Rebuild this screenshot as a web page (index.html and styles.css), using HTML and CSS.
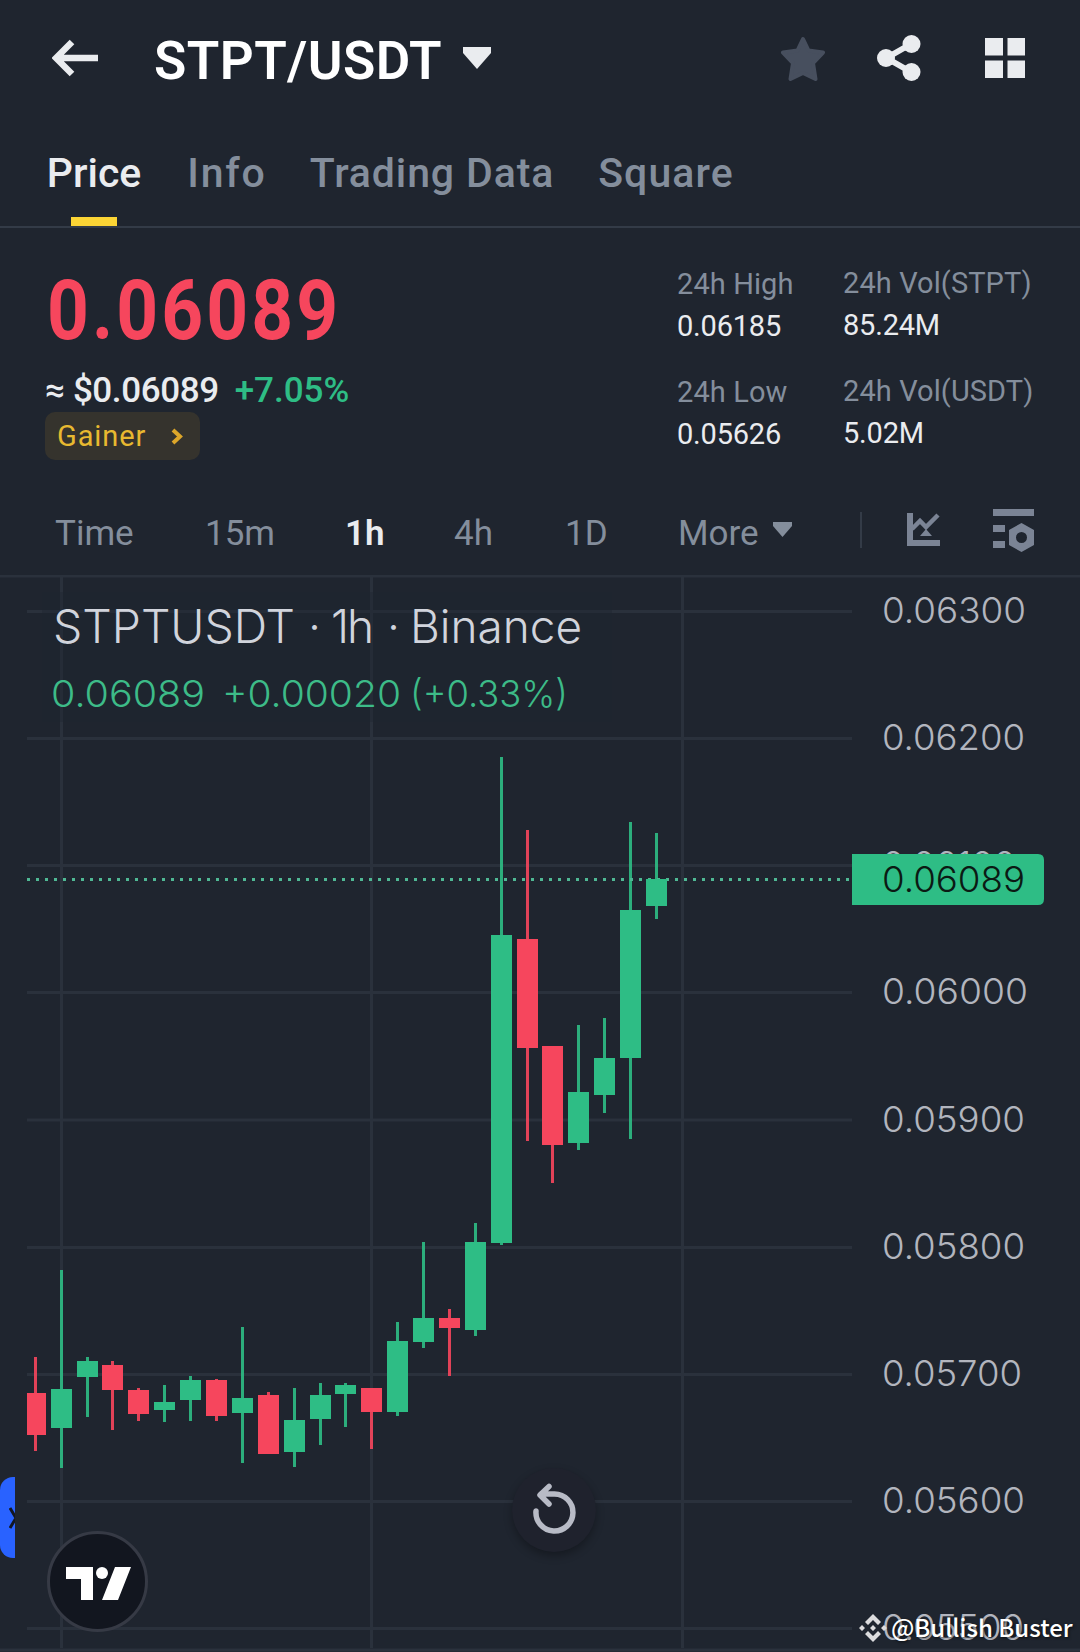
FILE: index.html
```html
<!DOCTYPE html>
<html lang="en">
<head>
  <meta charset="UTF-8">
  <meta name="viewport" content="width=device-width, initial-scale=1.0">
  <title>STPT/USDT</title>
  <link rel="stylesheet" href="styles.css">
</head>
<body>
  <header class="topbar">
    <svg class="back" width="48" height="38" viewBox="0 0 48 38">
      <path d="M20 3 L4 19 L20 35 M4 19 H46" fill="none" stroke="#eaecef" stroke-width="6.5"/>
    </svg>
    <h1>STPT/USDT</h1>
    <svg class="caret" width="28" height="22" viewBox="0 0 28 22">
      <path d="M0 0H28V6L14 22L0 6Z" fill="#eaecef"/>
    </svg>
    <div class="actions">
      <svg width="46" height="46" viewBox="0 0 46 46">
        <path d="M23 4 L28.500 15.500 L43 17.500 L33 28 L35.500 44 L23 38 L10.500 44 L13 28 L3 17.500 L17.500 15.500Z" fill="#474f5e" stroke="#474f5e" stroke-width="4" stroke-linejoin="round"/>
      </svg>
      <svg width="44" height="46" viewBox="0 0 44 46">
        <path d="M34 9 L9.500 23 L34 37" fill="none" stroke="#eaecef" stroke-width="6"/>
        <circle cx="34.500" cy="9" r="9" fill="#eaecef"/>
        <circle cx="9" cy="23" r="9" fill="#eaecef"/>
        <circle cx="34.500" cy="37" r="9" fill="#eaecef"/>
      </svg>
      <svg width="40" height="40" viewBox="0 0 40 40">
        <path d="M0 0H18V17.500H0Z M22.500 0H40V17.500H22.500Z M0 22.500H18V40H0Z M22.500 22.500H40V40H22.500Z" fill="#eaecef"/>
      </svg>
    </div>
  </header>

  <nav class="tabs">
    <a class="tab active">Price</a>
    <a class="tab info">Info</a>
    <a class="tab trading">Trading Data</a>
    <a class="tab square">Square</a>
  </nav>

  <section class="ticker">
    <div class="quote">
      <div class="last">0.06089</div>
      <div class="fiat"><span>≈ $0.06089</span><span class="up">+7.05%</span></div>
      <div class="badge">Gainer
        <svg width="12" height="17" viewBox="0 0 12 17"><path d="M2 2 L9 8.500 L2 15" fill="none" stroke="#dca62a" stroke-width="4"/></svg>
      </div>
    </div>
    <div class="stats">
      <div class="stat"><span>24h High</span><b>0.06185</b></div>
      <div class="stat"><span>24h Low</span><b>0.05626</b></div>
    </div>
    <div class="stats vol">
      <div class="stat"><span>24h Vol(STPT)</span><b>85.24M</b></div>
      <div class="stat"><span>24h Vol(USDT)</span><b>5.02M</b></div>
    </div>
  </section>

  <nav class="intervals">
    <span>Time</span>
    <span>15m</span>
    <span class="on">1h</span>
    <span>4h</span>
    <span>1D</span>
    <span class="more">More
      <svg width="19" height="15" viewBox="0 0 19 15"><path d="M0 0H19V4L9.500 15L0 4Z" fill="#848e9c"/></svg>
    </span>
    <i class="sep"></i>
    <svg width="33" height="34" viewBox="0 0 33 34">
      <path d="M0 0H6V27H33V33H0Z" fill="#7b8495"/>
      <path d="M5 16 L13 8 L19 14 L31 2" fill="none" stroke="#7b8495" stroke-width="4.500"/>
      <path d="M19 16 L25 23H13Z" fill="#7b8495"/>
    </svg>
    <svg width="42" height="43" viewBox="0 0 42 43">
      <path d="M0 0H41V7H0Z M0 16H12V23H0Z M0 32H12V39H0Z" fill="#7b8495"/>
      <path fill-rule="evenodd" d="M28.500 14 L41 21V36L28.500 43L16 36V21Z M28.500 23A5.500 5.500 0 1 0 28.500 34A5.500 5.500 0 1 0 28.500 23Z" fill="#7b8495"/>
    </svg>
  </nav>

  <main class="chart">
    <svg class="plot" width="1080" height="1077" viewBox="0 575 1080 1077">
      <path class="frame" d="M0 576H1080 M0 1650H1080"/>
      <path class="grid" d="M61.500 576V1648 M371.500 576V1648 M682.500 576V1648 M27 611.500H852 M27 738.500H852 M27 865.500H852 M27 992.500H852 M27 1120H852 M27 1247.500H852 M27 1374.500H852 M27 1501.500H852 M27 1628.500H852"/>
      <rect x="42" y="592" width="570" height="130" fill="#1f252f" opacity=".4"/>

      <!-- price scale -->
      <g class="scale">
        <text x="882" y="622.500" textLength="144" lengthAdjust="spacingAndGlyphs">0.06300</text>
        <text x="882" y="749.500" textLength="143" lengthAdjust="spacingAndGlyphs">0.06200</text>
        <text x="882" y="876.500" textLength="134" lengthAdjust="spacingAndGlyphs">0.06100</text>
        <text x="882" y="1003.500" textLength="146" lengthAdjust="spacingAndGlyphs">0.06000</text>
        <text x="882" y="1131.500" textLength="143" lengthAdjust="spacingAndGlyphs">0.05900</text>
        <text x="882" y="1258.500" textLength="143" lengthAdjust="spacingAndGlyphs">0.05800</text>
        <text x="882" y="1385.500" textLength="140" lengthAdjust="spacingAndGlyphs">0.05700</text>
        <text x="882" y="1512.500" textLength="143" lengthAdjust="spacingAndGlyphs">0.05600</text>
        <text x="882" y="1639.500" textLength="142" lengthAdjust="spacingAndGlyphs">0.05500</text>
      </g>

      <!-- wicks -->
      <g class="wick">
        <path class="down" d="M35.500 1357V1451 M112.500 1361V1430 M138.500 1388V1421 M216.500 1379V1421 M268.500 1392V1454 M371.500 1388V1449 M449.500 1309V1376 M527.500 830V1141 M552.500 1046V1183"/>
        <path class="rise" d="M61.500 1270V1468 M87.500 1357V1417 M164.500 1385V1422 M190.500 1376V1421 M242.500 1327V1463 M294.500 1388V1467 M320.500 1383V1445 M345.500 1383V1427 M397.500 1322V1416 M423.500 1242V1348 M475.500 1223V1336 M501.500 757V1245 M578.500 1025V1150 M604.500 1018V1113 M630.500 822V1139 M656.500 833V919"/>
      </g>
      <path class="last-line" d="M27 879.500H852"/>
      <!-- bodies -->
      <path d="M27 1393H46V1435H27Z" fill="#f6465d"/>
      <g class="body">
        <path class="down" d="M112.500 1365V1390 M138.500 1390V1414 M216.500 1380V1416 M268.500 1395V1454 M371.500 1388V1412 M449.500 1318V1328 M527.500 939V1048 M552.500 1046V1145"/>
        <path class="rise" d="M61.500 1389V1428 M87.500 1361V1377 M164.500 1402V1410 M190.500 1380V1400 M242.500 1398V1413 M294.500 1420V1452 M320.500 1395V1419 M345.500 1385V1394 M397.500 1341V1412 M423.500 1318V1342 M475.500 1242V1330 M501.500 935V1243 M578.500 1092V1143 M604.500 1058V1095 M630.500 910V1058 M656.500 879V906"/>
      </g>

      <path d="M852 854H1038Q1044 854 1044 860V899Q1044 905 1038 905H852Z" fill="#2ebd85"/>
      <text class="tag" x="882" y="891.500" textLength="143" lengthAdjust="spacingAndGlyphs">0.06089</text>

      <!-- legend -->
      <g class="legend">
        <text x="53" y="643" textLength="242" lengthAdjust="spacingAndGlyphs">STPTUSDT</text>
        <text x="308" y="643">·</text>
        <text x="331" y="643" textLength="43">1h</text>
        <text x="387" y="643">·</text>
        <text x="410" y="643" textLength="172" lengthAdjust="spacingAndGlyphs">Binance</text>
      </g>
      <g class="change">
        <text x="51" y="707" textLength="154" lengthAdjust="spacingAndGlyphs">0.06089</text>
        <text x="222" y="707" textLength="179" lengthAdjust="spacingAndGlyphs">+0.00020</text>
        <text x="410" y="707" textLength="158" lengthAdjust="spacingAndGlyphs">(+0.33%)</text>
      </g>
    </svg>

    <div class="drawer">
      <svg width="6" height="22" viewBox="0 0 6 22"><path d="M1 1 L7 11 L1 21" fill="none" stroke="#131722" stroke-width="3"/></svg>
    </div>

    <div class="tv">
      <svg width="65" height="33" viewBox="0 0 65 33">
        <path d="M0 0H27V33H15V12H0Z M49 0H65L52 33H36Z" fill="#fff"/>
        <circle cx="36" cy="6" r="6" fill="#fff"/>
      </svg>
    </div>

    <div class="reset">
      <svg width="44" height="52" viewBox="0 0 44 52">
        <path d="M3 28 A18.500 18.500 0 1 0 21.500 11 H8 M16 3.500 L7 12 L16 21" fill="none" stroke="#b8bbc6" stroke-width="5.500" stroke-linecap="round" stroke-linejoin="round"/>
      </svg>
    </div>

    <div class="watermark">
      <svg width="28" height="28" viewBox="0 0 28 28">
        <path d="M14 0L22 8L19 11L14 6L9 11L6 8Z M14 28L22 20L19 17L14 22L9 17L6 20Z M14 11L17 14L14 17L11 14Z M3 11L6 14L3 17L0 14Z M25 11L28 14L25 17L22 14Z" fill="#dcdcde"/>
      </svg>
      <span>@Bullish Buster</span>
    </div>
  </main>
</body>
</html>
```

FILE: styles.css
```css
* {
  box-sizing: border-box;
}
body {
  margin: 0;
  width: 1080px;
  height: 1652px;
  overflow: hidden;
  background: #1f252f;
  color: #eaecef;
  font-family: Roboto, 'Open Sans', sans-serif;
}
svg {
  display: block;
  flex: none;
}

/* header */
.topbar {
  display: flex;
  align-items: center;
  height: 116px;
  padding: 0 55px 0 52px;
}
h1 {
  margin: 6px 0 0 54px;
  width: 288px;
  font-size: 53px;
  font-weight: 600;
  letter-spacing: 0.4px;
  white-space: nowrap;
  color: #fff;
}
.caret {
  margin-left: 21px;
}
.actions {
  display: flex;
  align-items: center;
  margin-left: auto;
}
.actions svg + svg {
  margin-left: 51px;
}
.actions svg:last-child {
  margin-left: 64px;
}

/* tabs */
.tabs {
  display: flex;
  height: 112px;
  padding-left: 47px;
  border-bottom: 2px solid #333b47;
}
.tab {
  display: flex;
  flex-direction: column;
  align-items: center;
  justify-content: space-between;
  padding-top: 32px;
  width: 94px;
  font-size: 41px;
  line-height: 50px;
  font-weight: 500;
  color: #848e9c;
  white-space: nowrap;
}
.tab.active {
  color: #eaecef;
}
.tab.active::after {
  content: '';
  width: 46px;
  height: 9px;
  background: #fcd535;
}
.tab.info {
  width: 78px;
  margin-left: 47px;
  letter-spacing: 1.8px;
}
.tab.trading {
  width: 244px;
  margin-left: 44px;
  letter-spacing: 0.9px;
}
.tab.square {
  width: 136px;
  margin-left: 44px;
  letter-spacing: 1.1px;
}

/* price and 24h stats */
.ticker {
  display: flex;
  height: 262px;
  padding: 39px 0 0 45px;
}
.quote {
  width: 632px;
}
.last {
  margin: 2px 0 0 2px;
  font-size: 83px;
  line-height: 84px;
  font-weight: 700;
  letter-spacing: 3.5px;
  transform: scaleX(.88);
  transform-origin: 0 0;
  color: #f6465d;
}
.fiat {
  display: flex;
  gap: 16px;
  margin-top: 17px;
  font-size: 35px;
  line-height: 41px;
  font-weight: 500;
  letter-spacing: -0.4px;
  white-space: nowrap;
}
.up {
  color: #2ebd85;
  letter-spacing: 0;
}
.badge {
  display: flex;
  align-items: center;
  justify-content: space-between;
  width: 155px;
  height: 48px;
  margin-top: 1px;
  padding: 0 17px 0 12px;
  border-radius: 10px;
  background: #35332d;
  color: #e8b930;
  font-size: 29px;
  letter-spacing: 0.9px;
}
.stats {
  width: 166px;
  margin-top: -4px;
}
.stat {
  display: flex;
  flex-direction: column;
  height: 108px;
  font-size: 29px;
  line-height: 42px;
  white-space: nowrap;
}
.stat span {
  color: #848e9c;
  letter-spacing: 0.1px;
}
.stat b {
  font-weight: 400;
  letter-spacing: -0.2px;
}
.vol {
  margin-top: -5px;
}

/* intervals */
.intervals {
  display: grid;
  grid-template-columns: 150px 140px 109px 111px 113px 182px 47px 86px 42px;
  align-items: center;
  height: 85px;
  padding: 1px 0 0 55px;
  font-size: 35px;
  color: #848e9c;
}
.intervals > svg, .sep {
  position: relative;
  top: -3px;
}
.intervals .on {
  color: #eaecef;
  font-weight: 600;
}
.more {
  display: flex;
  align-items: center;
  gap: 14px;
}
.more svg {
  margin-bottom: 7px;
}
.sep {
  width: 2px;
  height: 36px;
  background: #333b47;
}

/* chart */
.chart {
  position: relative;
  height: 1077px;
}
.frame, .grid {
  fill: none;
  stroke: #2a313c;
  stroke-width: 3;
}
.scale, .tag, .legend, .change {
  font-family: Inter, 'Liberation Sans', sans-serif;
  font-weight: 300;
}
.scale {
  font-size: 35px;
  fill: #b2b5be;
}
.tag {
  font-size: 35px;
  fill: #0b1a14;
}
.legend {
  font-size: 46px;
  fill: #d1d4dc;
}
.change {
  font-size: 37px;
  fill: #3dbb88;
}
.wick {
  stroke-width: 3;
  opacity: .9;
}
.body {
  stroke-width: 21;
}
.rise {
  stroke: #2ebd85;
}
.down {
  stroke: #f6465d;
}
.last-line {
  stroke: #4fb894;
  stroke-width: 3;
  stroke-dasharray: 3 6;
}
.drawer {
  position: absolute;
  left: 0;
  top: 902px;
  display: flex;
  align-items: center;
  justify-content: flex-end;
  width: 15px;
  height: 81px;
  border-radius: 13px 0 0 13px;
  background: #2962ff;
}
.tv {
  position: absolute;
  left: 47px;
  top: 956px;
  display: flex;
  align-items: center;
  justify-content: center;
  width: 101px;
  height: 101px;
  padding: 3px 0 0 1px;
  border: 3px solid #363a45;
  border-radius: 50%;
  background: #12161f;
}
.reset {
  position: absolute;
  left: 512px;
  top: 893px;
  display: flex;
  align-items: center;
  justify-content: center;
  width: 84px;
  height: 84px;
  padding: 0 0 3px 1px;
  border-radius: 50%;
  background: #1f222d;
  box-shadow: 0 4px 8px rgba(0, 0, 0, .3);
}
.watermark {
  position: absolute;
  left: 859px;
  top: 1035px;
  display: flex;
  align-items: center;
  gap: 4px;
  height: 36px;
  font-family: 'Noto Sans CJK SC', sans-serif;
  font-size: 24px;
  line-height: 32px;
  font-weight: 500;
  white-space: nowrap;
  color: #fff;
  text-shadow: 1px 1px 3px rgba(0, 0, 0, .7);
}
.watermark span {
  margin-top: -3px;
}
```
